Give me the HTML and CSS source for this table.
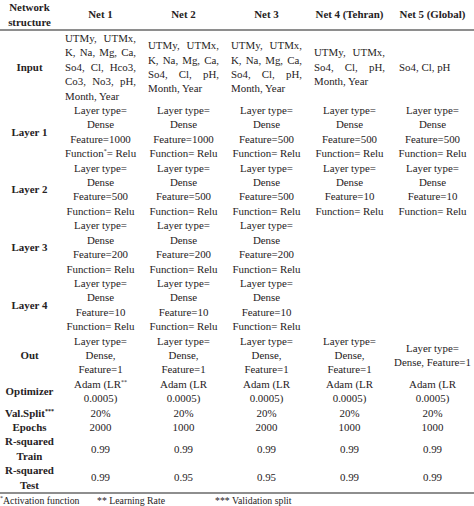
FILE: index.html
```html
<!DOCTYPE html>
<html>
<head>
<meta charset="utf-8">
<link rel="stylesheet" href="styles.css">
</head>
<body>
<table class="net">
  <colgroup>
    <col class="c-lab"><col class="c-net"><col class="c-net"><col class="c-net"><col class="c-net"><col class="c-net">
  </colgroup>
  <thead>
    <tr>
      <th class="lab">Network<br>structure</th>
      <th>Net 1</th>
      <th>Net 2</th>
      <th>Net 3</th>
      <th>Net 4 (Tehran)</th>
      <th>Net 5 (Global)</th>
    </tr>
  </thead>
  <tbody>
    <tr>
      <th class="lab">Input</th>
      <td class="inp">
        <div class="jl">UTMy, UTMx,</div>
        <div class="jl">K, Na, Mg, Ca,</div>
        <div class="jl">So4, Cl, Hco3,</div>
        <div class="jl">Co3, No3, pH,</div>
        <div>Month, Year</div>
      </td>
      <td class="inp">
        <div class="jl">UTMy, UTMx,</div>
        <div class="jl">K, Na, Mg, Ca,</div>
        <div class="jl">So4, Cl, pH,</div>
        <div>Month, Year</div>
      </td>
      <td class="inp">
        <div class="jl">UTMy, UTMx,</div>
        <div class="jl">K, Na, Mg, Ca,</div>
        <div class="jl">So4, Cl, pH,</div>
        <div>Month, Year</div>
      </td>
      <td class="inp">
        <div class="jl">UTMy, UTMx,</div>
        <div class="jl">So4, Cl, pH,</div>
        <div>Month, Year</div>
      </td>
      <td class="inp inp5">
        <div>So4, Cl, pH</div>
      </td>
    </tr>
    <tr>
      <th class="lab">Layer 1</th>
      <td>Layer type=<br>Dense<br>Feature=1000<br>Function<sup>*</sup>= Relu</td>
      <td>Layer type=<br>Dense<br>Feature=1000<br>Function= Relu</td>
      <td>Layer type=<br>Dense<br>Feature=500<br>Function= Relu</td>
      <td>Layer type=<br>Dense<br>Feature=500<br>Function= Relu</td>
      <td>Layer type=<br>Dense<br>Feature=500<br>Function= Relu</td>
    </tr>
    <tr>
      <th class="lab">Layer 2</th>
      <td>Layer type=<br>Dense<br>Feature=500<br>Function= Relu</td>
      <td>Layer type=<br>Dense<br>Feature=500<br>Function= Relu</td>
      <td>Layer type=<br>Dense<br>Feature=500<br>Function= Relu</td>
      <td>Layer type=<br>Dense<br>Feature=10<br>Function= Relu</td>
      <td>Layer type=<br>Dense<br>Feature=10<br>Function= Relu</td>
    </tr>
    <tr>
      <th class="lab">Layer 3</th>
      <td>Layer type=<br>Dense<br>Feature=200<br>Function= Relu</td>
      <td>Layer type=<br>Dense<br>Feature=200<br>Function= Relu</td>
      <td>Layer type=<br>Dense<br>Feature=200<br>Function= Relu</td>
      <td></td>
      <td></td>
    </tr>
    <tr>
      <th class="lab">Layer 4</th>
      <td>Layer type=<br>Dense<br>Feature=10<br>Function= Relu</td>
      <td>Layer type=<br>Dense<br>Feature=10<br>Function= Relu</td>
      <td>Layer type=<br>Dense<br>Feature=10<br>Function= Relu</td>
      <td></td>
      <td></td>
    </tr>
    <tr>
      <th class="lab">Out</th>
      <td>Layer type=<br>Dense,<br>Feature=1</td>
      <td>Layer type=<br>Dense,<br>Feature=1</td>
      <td>Layer type=<br>Dense,<br>Feature=1</td>
      <td>Layer type=<br>Dense,<br>Feature=1</td>
      <td class="nowrap">Layer type=<br>Dense, Feature=1</td>
    </tr>
    <tr>
      <th class="lab">Optimizer</th>
      <td>Adam (LR<sup>**</sup><br>0.0005)</td>
      <td>Adam (LR<br>0.0005)</td>
      <td>Adam (LR<br>0.0005)</td>
      <td>Adam (LR<br>0.0005)</td>
      <td>Adam (LR<br>0.0005)</td>
    </tr>
    <tr>
      <th class="lab">Val.Split<sup>***</sup></th>
      <td>20%</td><td>20%</td><td>20%</td><td>20%</td><td>20%</td>
    </tr>
    <tr>
      <th class="lab">Epochs</th>
      <td>2000</td><td>1000</td><td>2000</td><td>1000</td><td>1000</td>
    </tr>
    <tr>
      <th class="lab">R-squared<br>Train</th>
      <td>0.99</td><td>0.99</td><td>0.99</td><td>0.99</td><td>0.99</td>
    </tr>
    <tr class="last">
      <th class="lab">R-squared<br>Test</th>
      <td>0.99</td><td>0.95</td><td>0.95</td><td>0.99</td><td>0.99</td>
    </tr>
  </tbody>
</table>
<div class="notes">
  <span class="n1"><sup>*</sup>Activation function</span>
  <span class="n2">** Learning Rate</span>
  <span class="n3">*** Validation split</span>
</div>
</body>
</html>
```

FILE: styles.css
```css
html, body {
  margin: 0;
  padding: 0;
  background: #ffffff;
  overflow: hidden;
}
body {
  font-family: "Liberation Serif", "Times New Roman", serif;
  font-size: 10.9px;
  color: #262223;
}
.net {
  width: 474px;
  table-layout: fixed;
  border-collapse: collapse;
  border-spacing: 0;
}
.c-lab { width: 59px; }
.c-net { width: 83px; }
.net th, .net td {
  padding: 0;
  line-height: 14.4px;
  text-align: center;
  vertical-align: middle;
  font-weight: normal;
}
.net th {
  font-weight: bold;
}
.net thead th {
  height: 29px;
  border-bottom: 2px solid #8e8e8e;
}
.net tbody tr.last th,
.net tbody tr.last td {
  border-bottom: 2px solid #8e8e8e;
}
.net td.inp {
  text-align: left;
  padding: 0 6px;
}
.net td.inp5 {
  padding-left: 8px;
}
.jl {
  text-align: justify;
  text-align-last: justify;
}
.nowrap {
  white-space: nowrap;
}
sup {
  font-size: 6px;
  line-height: 0;
  vertical-align: 4px;
}
.notes {
  display: flex;
  font-size: 9.8px;
  line-height: 13px;
  padding-top: 0;
}
.n1 { width: 97px; }
.n2 { width: 118px; }
```
